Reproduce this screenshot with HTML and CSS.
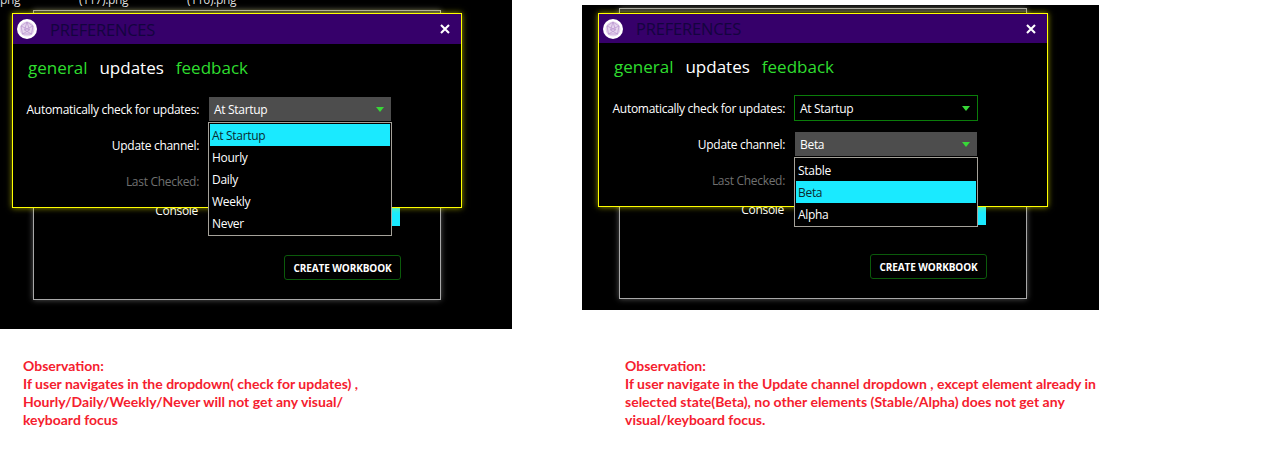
FILE: index.html
```html
<!DOCTYPE html>
<html lang="en">
<head>
    <meta charset="UTF-8">
    <meta name="viewport" content="width=device-width, initial-scale=1.0">
    <title>Preferences dropdown focus</title>
    <link rel="stylesheet" href="styles.css">
</head>
<body>
    <div class="shots">
        <!-- first capture: check for updates list open -->
        <div class="shot shot-left">
            <div class="files">
                <span class="file file-a">png</span>
                <span class="file file-b">(117).png</span>
                <span class="file file-c">(116).png</span>
            </div>
            <div class="window">
                <div class="window-strip"></div>
                <div class="console-row">
                    <span class="console-label">Console</span>
                    <span class="console-bar"></span>
                </div>
                <div class="window-actions">
                    <button class="create">CREATE WORKBOOK</button>
                </div>
            </div>
            <div class="dialog">
                <div class="titlebar">
                    <svg class="logo" viewBox="0 0 20 20">
                        <circle cx="10" cy="10" r="10" fill="#fff"/>
                        <circle cx="10" cy="10" r="7.5" fill="#e6d5ee"/>
                        <path d="M10 3 L16 7 L14.5 15 L5.5 15 L4 7 Z M10 3 L7.5 11 L14.5 15 M10 3 L12.5 11 L5.5 15 M4 7 L12.5 11 M16 7 L7.5 11" fill="none" stroke="#b793cf" stroke-width="0.7"/>
                    </svg>
                    <span class="title">PREFERENCES</span>
                    <svg class="close" viewBox="0 0 10 10">
                        <path d="M1 1 L9 9 M9 1 L1 9" stroke="#fff" stroke-width="2.1"/>
                    </svg>
                </div>
                <div class="tabs">
                    <span class="tab">general</span>
                    <span class="tab active">updates</span>
                    <span class="tab">feedback</span>
                </div>
                <div class="form">
                    <label>Automatically check for updates:</label>
                    <div class="combo open">
                        <span>At Startup</span><i class="arrow"></i>
                        <ul class="list">
                            <li class="selected">At Startup</li>
                            <li>Hourly</li>
                            <li>Daily</li>
                            <li>Weekly</li>
                            <li>Never</li>
                        </ul>
                    </div>
                    <label>Update channel:</label>
                    <div class="combo"></div>
                    <label class="muted">Last Checked:</label>
                    <div></div>
                </div>
            </div>
        </div>

        <!-- second capture: update channel list open -->
        <div class="shot shot-right">
            <div class="window">
                <div class="window-strip"></div>
                <div class="console-row">
                    <span class="console-label">Console</span>
                    <span class="console-bar"></span>
                </div>
                <div class="window-actions">
                    <button class="create">CREATE WORKBOOK</button>
                </div>
            </div>
            <div class="dialog">
                <div class="titlebar">
                    <svg class="logo" viewBox="0 0 20 20">
                        <circle cx="10" cy="10" r="10" fill="#fff"/>
                        <circle cx="10" cy="10" r="7.5" fill="#e6d5ee"/>
                        <path d="M10 3 L16 7 L14.5 15 L5.5 15 L4 7 Z M10 3 L7.5 11 L14.5 15 M10 3 L12.5 11 L5.5 15 M4 7 L12.5 11 M16 7 L7.5 11" fill="none" stroke="#b793cf" stroke-width="0.7"/>
                    </svg>
                    <span class="title">PREFERENCES</span>
                    <svg class="close" viewBox="0 0 10 10">
                        <path d="M1 1 L9 9 M9 1 L1 9" stroke="#fff" stroke-width="2.1"/>
                    </svg>
                </div>
                <div class="tabs">
                    <span class="tab">general</span>
                    <span class="tab active">updates</span>
                    <span class="tab">feedback</span>
                </div>
                <div class="form">
                    <label>Automatically check for updates:</label>
                    <div class="combo focused">
                        <span>At Startup</span><i class="arrow"></i>
                    </div>
                    <label>Update channel:</label>
                    <div class="combo open">
                        <span>Beta</span><i class="arrow"></i>
                        <ul class="list">
                            <li>Stable</li>
                            <li class="selected">Beta</li>
                            <li>Alpha</li>
                        </ul>
                    </div>
                    <label class="muted">Last Checked:</label>
                    <div></div>
                </div>
            </div>
        </div>
    </div>

    <div class="notes">
        <p class="note note-left">Observation:<br>If user navigates in the dropdown( check for updates) ,<br>Hourly/Daily/Weekly/Never will not get any visual/<br>keyboard focus</p>
        <p class="note note-right">Observation:<br>If user navigate in the Update channel dropdown , except element already in<br>selected state(Beta), no other elements (Stable/Alpha) does not get any<br>visual/keyboard focus.</p>
    </div>
</body>
</html>
```

FILE: styles.css
```css
body {
    margin: 0;
    background-color: #fff;
    font-family: 'Open Sans', 'Noto Sans', sans-serif;
    overflow: hidden;
}

.shots {
    display: flex;
    align-items: flex-start;
    height: 329px;
}

.shot {
    position: relative;
    overflow: hidden;
    background-color: #000;
    color: #fff;
}

.shot-left {
    width: 512px;
    height: 329px;
}

.shot-right {
    width: 517px;
    height: 305px;
    margin-top: 5px;
    margin-left: 70px;
}

/* file names of the explorer behind the app, cut by the capture */
.files {
    position: absolute;
    top: -9px;
    left: 0;
    font-size: 12px;
    letter-spacing: -0.3px;
    color: #ddd;
}

.file {
    position: absolute;
    top: 0;
}

.file-a { left: 0; }
.file-b { left: 79px; }
.file-c { left: 187px; }

.window {
    position: absolute;
    box-sizing: border-box;
    width: 408px;
    border: 1px solid #a8a8a8;
    box-shadow: 0 0 6px rgba(255, 255, 255, 0.35);
}

.shot-left .window {
    left: 33px;
    top: 10px;
    height: 290px;
}

.shot-right .window {
    left: 37px;
    top: 3px;
    height: 291px;
}

.window-strip {
    height: 3px;
    background: linear-gradient(90deg, #2b2b33, #27272f 40%, #33333f);
}

.console-row {
    display: flex;
    align-items: center;
    gap: 11px;
    height: 30px;
    margin-top: 182px;
    font-size: 12px;
    letter-spacing: -0.3px;
}

.shot-right .console-row {
    margin-top: 183px;
}

.console-label {
    width: 164px;
    padding-bottom: 2px;
    text-align: right;
}

.console-bar {
    width: 191px;
    height: 30px;
    background-color: #1aeaff;
}

.window-actions {
    display: flex;
    justify-content: flex-end;
    padding: 29px 39px 0 0;
}

.create {
    width: 117px;
    height: 25px;
    padding: 0;
    background-color: #000;
    color: #fff;
    border: 1px solid #0b5a0b;
    border-radius: 3px;
    font-family: inherit;
    font-size: 10px;
    font-weight: 700;
    letter-spacing: -0.1px;
}

.dialog {
    position: absolute;
    box-sizing: border-box;
    width: 450px;
    background-color: #000;
    border: 1px solid #ffff00;
    box-shadow: 0 0 6px rgba(255, 255, 0, 0.6);
}

.shot-left .dialog {
    left: 12px;
    top: 13px;
    height: 195px;
}

.shot-right .dialog {
    left: 16px;
    top: 8px;
    height: 194px;
}

.titlebar {
    display: flex;
    align-items: center;
    height: 30px;
    padding: 0 11px 0 4px;
    background-color: #36006a;
}

.shot-right .titlebar {
    height: 29px;
}

.logo {
    width: 20px;
    height: 20px;
    flex: none;
}

.title {
    margin-left: 13px;
    font-size: 16.5px;
    letter-spacing: -0.2px;
    color: #14043f;
}

.close {
    width: 10px;
    height: 10px;
    margin-left: auto;
}

.tabs {
    display: flex;
    gap: 12px;
    height: 24px;
    margin: 12px 0 17px 15px;
    font-size: 17px;
    line-height: 24px;
    color: #2fdc2f;
}

.tab.active {
    color: #fff;
}

.form {
    display: grid;
    grid-template-columns: 186px 182px;
    grid-auto-rows: 24px;
    column-gap: 10px;
    row-gap: 12px;
    font-size: 12px;
    letter-spacing: -0.3px;
}

.form label {
    line-height: 26px;
    text-align: right;
    white-space: nowrap;
}

.form label.muted {
    color: #707070;
}

.combo {
    position: relative;
    display: flex;
    align-items: center;
    justify-content: space-between;
    padding: 0 7px 0 5px;
}

.combo.open {
    background-color: #4d4d4d;
}

.combo.focused {
    outline: 1px solid #0a7d0a;
}

.arrow {
    width: 0;
    height: 0;
    border-left: 4px solid transparent;
    border-right: 4px solid transparent;
    border-top: 5px solid #38d838;
}

.list {
    position: absolute;
    top: 25px;
    left: -1px;
    right: -1px;
    z-index: 1;
    margin: 0;
    padding: 1px;
    list-style: none;
    background-color: #000;
    border: 1px solid #a5a29a;
}

.list li {
    height: 22px;
    padding-left: 2px;
    line-height: 24px;
}

.list li.selected {
    background-color: #1aeaff;
    color: #0b2a30;
}

.notes {
    display: grid;
    grid-template-columns: 625px 1fr;
    padding-top: 28px;
}

.note {
    margin: 0;
    font-family: Lato, 'Liberation Sans', sans-serif;
    font-size: 14px;
    font-weight: 700;
    line-height: 18px;
    color: #f5202e;
}

.note-left {
    padding-left: 23px;
}
```
